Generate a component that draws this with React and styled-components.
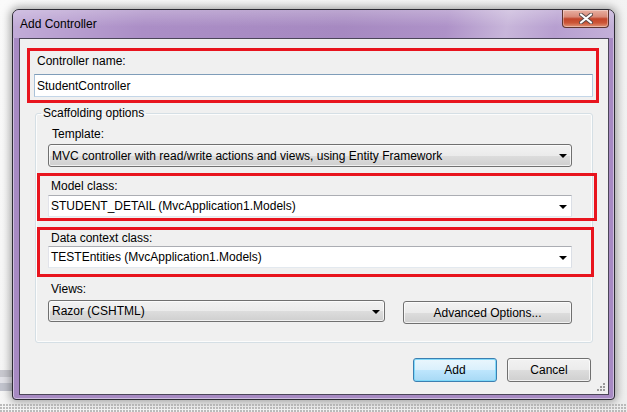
import React from "react"
import styled, { createGlobalStyle } from "styled-components"

const GlobalStyle = createGlobalStyle`
    html, body {
        margin: 0;
        padding: 0;
        background: #f3f3f3;
    }
    body {
        font-family: "Liberation Sans", Arial, sans-serif;
        font-size: 12px;
        color: #000;
    }
`

const Page = styled.div`
    width: 627px;
    height: 412px;
    overflow: hidden;
    display: flex;
    flex-direction: column;
    background:
        linear-gradient(to bottom,
            transparent 370px,
            #c8c8cf 370px, #c8c8cf 377px,
            #e2e2e8 377px, #e2e2e8 383px,
            #c2c4ce 383px, #c2c4ce 391px,
            transparent 391px) 0 0 / 14px 412px no-repeat,
        linear-gradient(135deg, #fafafa 0%, #eeeeee 100%);
`

const Window = styled.div`
    width: 590px;
    margin: 9px 0 0 12px;
    border: 1px solid #2c2b33;
    border-radius: 7px 7px 4px 4px;
    background: #a78ac3;
    box-shadow: 0 0 9px 2px rgba(0, 0, 0, 0.35), inset 0 0 0 1px rgba(255, 255, 255, 0.45);
    padding: 0 5px 4px 6px;
    display: flex;
    flex-direction: column;
`

const TitleBar = styled.div`
    height: 28px;
    margin: 0 -5px 0 -6px;
    padding: 0 5px 0 7px;
    display: flex;
    justify-content: space-between;
    align-items: flex-start;
    border-radius: 6px 6px 0 0;
    background:
        linear-gradient(to bottom, rgba(255, 255, 255, 0.25), rgba(255, 255, 255, 0) 60%),
        linear-gradient(100deg, #c2acd8 0%, #ab8ec6 22%, #a689c1 55%, #ae92c8 72%, #c8b6da 82%, #b79fd0 90%, #c3b0d8 100%);
`

const Title = styled.div`
    padding-top: 6px;
    line-height: 16px;
    color: #000;
`

const CloseButton = styled.div`
    width: 45px;
    height: 17px;
    border: 1px solid #5e3530;
    border-top: none;
    border-radius: 0 0 4px 4px;
    display: flex;
    align-items: center;
    justify-content: center;
    background: linear-gradient(to bottom, #e8b0a2 0%, #d98a78 40%, #c2452b 52%, #cc5536 75%, #e0957a 100%);
    box-shadow: inset 0 0 0 1px rgba(255, 255, 255, 0.35);
`

const Client = styled.div`
    position: relative;
    border: 1px solid #4b4558;
    background: #f0f0f0;
    padding: 9px 9px 12px 7px;
    display: flex;
    flex-direction: column;
`

const Highlight = styled.div`
    border: 3px solid #e8141e;
    margin: ${p => p.$mt || 0}px ${p => p.$mr || 0}px 0 ${p => p.$ml || 0}px;
    padding: ${p => p.$pt || 0}px ${p => p.$pr || 0}px ${p => p.$pb || 0}px ${p => p.$pl || 0}px;
    display: flex;
    flex-direction: column;
`

const Label = styled.div`
    line-height: 16px;
    padding-left: ${p => p.$indent || 0}px;
    margin-top: ${p => p.$mt || 0}px;
    margin-bottom: ${p => p.$mb || 0}px;
`

const TextBox = styled.div`
    height: 21px;
    border: 1px solid;
    border-color: #7f9db9 #b6cbe0 #c4d6e8 #a9c1d8;
    background: #fff;
    padding-left: 2px;
    display: flex;
    align-items: center;
`

const Combo = styled.div`
    height: ${p => p.$h || 22}px;
    box-sizing: border-box;
    display: flex;
    align-items: center;
    justify-content: space-between;
    padding: 0 4px 0 ${p => (p.$editable ? 2 : 3)}px;
    ${p => p.$width ? `width: ${p.$width}px;` : ""}
    ${p => p.$editable ? `
        border: 1px solid;
        border-color: #abadb3 #dbdfe6 #e3e9ef #e2e3ea;
        background: #fff;
    ` : `
        border: 1px solid #707070;
        border-radius: 3px;
        background: linear-gradient(to bottom, #f2f2f2 0%, #ebebeb 50%, #dddddd 50%, #cfcfcf 100%);
        box-shadow: inset 0 0 0 1px rgba(255, 255, 255, 0.7);
    `}
`

const Arrow = styled.span`
    width: 0;
    height: 0;
    border-left: 4px solid transparent;
    border-right: 4px solid transparent;
    border-top: 4px solid #000;
    margin-top: 1px;
`

const GroupBox = styled.fieldset`
    margin: 2px 6px 0 8px;
    padding: 4px 20px 18px 12px;
    border: 1px solid #d5dfe5;
    border-radius: 3px;
    box-shadow: inset 0 0 0 1px rgba(255, 255, 255, 0.8);
    min-width: 0;
    display: flex;
    flex-direction: column;
`

const Legend = styled.legend`
    margin-left: -7px;
    padding: 0 2px;
    line-height: 17px;
`

const ViewsRow = styled.div`
    display: flex;
    justify-content: space-between;
    align-items: flex-start;
`

const Button = styled.div`
    width: ${p => p.$width || 84}px;
    height: ${p => p.$h || 24}px;
    margin-top: ${p => p.$mt || 0}px;
    box-sizing: border-box;
    display: flex;
    align-items: center;
    justify-content: center;
    border-radius: 3px;
    border: 1px solid ${p => (p.$primary ? "#3c7fb1" : "#707070")};
    background: ${p => p.$primary
        ? "linear-gradient(to bottom, #eaf6fd 0%, #d9f0fc 50%, #bee6fd 50%, #a7d9f5 100%)"
        : "linear-gradient(to bottom, #f2f2f2 0%, #ebebeb 50%, #dddddd 50%, #cfcfcf 100%)"};
    box-shadow: inset 0 0 0 1px ${p => (p.$primary ? "rgba(120, 215, 250, 0.9)" : "rgba(255, 255, 255, 0.7)")};
`

const Footer = styled.div`
    display: flex;
    justify-content: flex-end;
    gap: 10px;
    margin-top: 15px;
    padding-right: 8px;
`

const Grip = styled.svg`
    position: absolute;
    right: 2px;
    bottom: 2px;
`

const DotStrip = styled.div`
    height: 9px;
    margin-top: 4px;
    background: radial-gradient(circle at 1px 1px, #ababab 0.7px, transparent 1.1px) 0 0 / 3px 3px;
    opacity: 0.8;
`

const CloseGlyph = () => (
    <svg width="14" height="11" viewBox="0 0 14 11">
        <path d="M2 1.5 L12 9.5 M12 1.5 L2 9.5" stroke="#5a4a4a" strokeWidth="4" strokeLinecap="round" />
        <path d="M2 1.5 L12 9.5 M12 1.5 L2 9.5" stroke="#fff" strokeWidth="2.2" strokeLinecap="round" />
    </svg>
)

const ComboBox = ({ text, editable, height, width }) => (
    <Combo $editable={editable} $h={height} $width={width}>
        <span>{text}</span>
        <Arrow />
    </Combo>
)

export default function App() {
    return (
        <Page>
            <GlobalStyle />
            <Window>
                <TitleBar>
                    <Title>Add Controller</Title>
                    <CloseButton><CloseGlyph /></CloseButton>
                </TitleBar>
                <Client>
                    <Highlight $pt={2} $pb={3} $pl={4} $pr={3}>
                        <Label $indent={3} $mb={5}>Controller name:</Label>
                        <TextBox>StudentController</TextBox>
                    </Highlight>
                    <GroupBox>
                        <Legend>Scaffolding options</Legend>
                        <Label $indent={4} $mb={2}>Template:</Label>
                        <ComboBox height={23} text="MVC controller with read/write actions and views, using Entity Framework" />
                        <Highlight $mt={6} $ml={-11} $mr={-25} $pl={8} $pr={22} $pt={2} $pb={1}>
                            <Label $indent={3} $mb={1}>Model class:</Label>
                            <ComboBox editable text="STUDENT_DETAIL (MvcApplication1.Models)" />
                        </Highlight>
                        <Highlight $mt={6} $ml={-11} $mr={-22} $pl={8} $pr={19} $pt={0} $pb={6}>
                            <Label $indent={3}>Data context class:</Label>
                            <ComboBox editable text="TESTEntities (MvcApplication1.Models)" />
                        </Highlight>
                        <Label $indent={3} $mt={4} $mb={3}>Views:</Label>
                        <ViewsRow>
                            <ComboBox width={337} text="Razor (CSHTML)" />
                            <Button $width={169} $h={23} $mt={1}>Advanced Options...</Button>
                        </ViewsRow>
                    </GroupBox>
                    <Footer>
                        <Button $primary>Add</Button>
                        <Button>Cancel</Button>
                    </Footer>
                    <Grip width="10" height="10" viewBox="0 0 10 10">
                        <g fill="#9a9a9a">
                            <rect x="7" y="1" width="2" height="2" />
                            <rect x="4" y="4" width="2" height="2" />
                            <rect x="7" y="4" width="2" height="2" />
                            <rect x="1" y="7" width="2" height="2" />
                            <rect x="4" y="7" width="2" height="2" />
                            <rect x="7" y="7" width="2" height="2" />
                        </g>
                    </Grip>
                </Client>
            </Window>
            <DotStrip />
        </Page>
    )
}
